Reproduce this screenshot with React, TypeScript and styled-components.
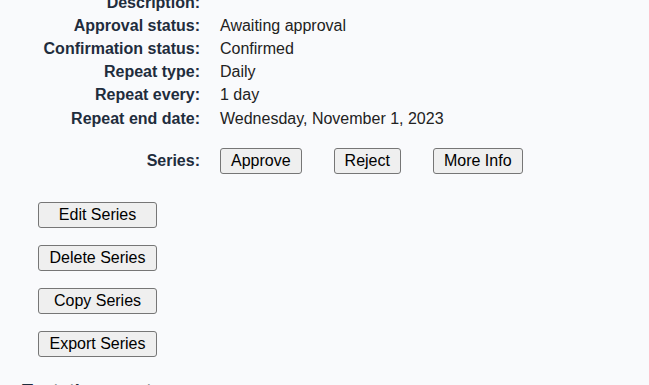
import { createGlobalStyle, styled } from "styled-components";
import { Fragment } from "react";

const GlobalStyle = createGlobalStyle`
  html, body {
    margin: 0;
    padding: 0;
    background: #f9fafc;
    font-family: "Liberation Sans", Arial, sans-serif;
    font-size: 16px;
    color: #1f2d3d;
    overflow: hidden;
  }
`;

const Page = styled.div`
  margin-top: -9px;
  display: flex;
  flex-direction: column;
`;

const Details = styled.div`
  display: grid;
  grid-template-columns: 200px auto;
  column-gap: 20px;
  justify-content: start;
`;

const Label = styled.div`
  font-weight: bold;
  text-align: right;
  padding: 2.6px 0;
  color: #1f2d3d;
`;

const Value = styled.div`
  padding: 2.6px 0;
  color: #222;
`;

const SeriesRow = styled.div`
  display: grid;
  grid-template-columns: 200px auto;
  column-gap: 20px;
  align-items: center;
  margin-top: 18px;
`;

const Actions = styled.div`
  display: flex;
  gap: 32px;
`;

const Button = styled.button<{ $wide?: boolean }>`
  font-family: "Liberation Sans", Arial, sans-serif;
  font-size: 16px;
  color: #000;
  background: #efefef;
  border: 1px solid #767676;
  border-radius: 3px;
  padding: 3px 10px;
  line-height: 18px;
  width: ${(p) => (p.$wide ? "119px" : "auto")};
  cursor: pointer;
`;

const SeriesButtons = styled.div`
  display: flex;
  flex-direction: column;
  align-items: flex-start;
  gap: 17px;
  margin: 28px 0 0 38px;
`;

const Heading = styled.h3`
  margin: 24px 0 0 22px;
  font-size: 18px;
  color: #1f2d3d;
`;

const rows: [string, string][] = [
  ["Description:", ""],
  ["Approval status:", "Awaiting approval"],
  ["Confirmation status:", "Confirmed"],
  ["Repeat type:", "Daily"],
  ["Repeat every:", "1 day"],
  ["Repeat end date:", "Wednesday, November 1, 2023"],
];

export default function App() {
  return (
    <>
      <GlobalStyle />
      <Page>
        <Details>
          {rows.map(([label, value]) => (
            <Fragment key={label}>
              <Label>{label}</Label>
              <Value>{value || "\u00a0"}</Value>
            </Fragment>
          ))}
        </Details>
        <SeriesRow>
          <Label>Series:</Label>
          <Actions>
            <Button>Approve</Button>
            <Button>Reject</Button>
            <Button>More Info</Button>
          </Actions>
        </SeriesRow>
        <SeriesButtons>
          <Button $wide>Edit Series</Button>
          <Button $wide>Delete Series</Button>
          <Button $wide>Copy Series</Button>
          <Button $wide>Export Series</Button>
        </SeriesButtons>
        <Heading>Tentative events</Heading>
      </Page>
    </>
  );
}
